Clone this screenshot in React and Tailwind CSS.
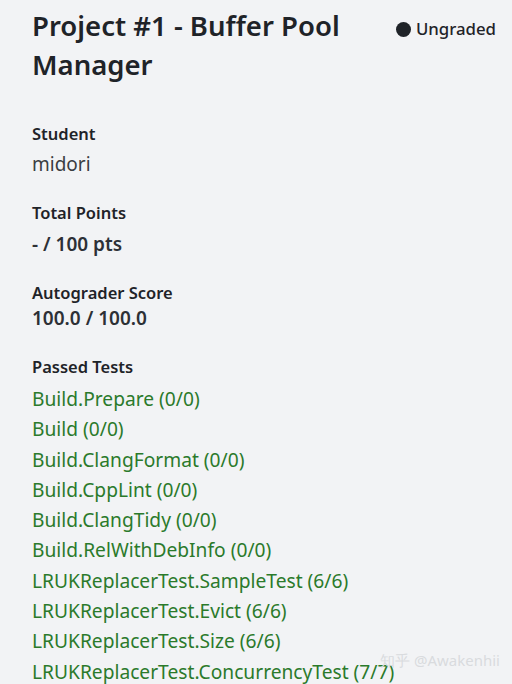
import React from 'react';

const tests = [
  'Build.Prepare (0/0)',
  'Build (0/0)',
  'Build.ClangFormat (0/0)',
  'Build.CppLint (0/0)',
  'Build.ClangTidy (0/0)',
  'Build.RelWithDebInfo (0/0)',
  'LRUKReplacerTest.SampleTest (6/6)',
  'LRUKReplacerTest.Evict (6/6)',
  'LRUKReplacerTest.Size (6/6)',
  'LRUKReplacerTest.ConcurrencyTest (7/7)',
];

const App = () => {
  return (
    <div
      className="relative h-[684px] overflow-hidden bg-[#f2f3f5] text-[#1f2328] pl-[32px] pr-[16px]"
      style={{ fontFamily: '"Noto Sans", "Open Sans", sans-serif' }}
    >
      {/* Titulo */}
      <div className="flex justify-between items-start pt-[6px]">
        <h1 className="flex-1 text-[27.5px] leading-[39px] font-semibold pr-4">
          Project #1 - Buffer Pool Manager
        </h1>
        <div className="flex items-center gap-[5px] mt-[12px] shrink-0">
          <span className="w-[15px] h-[15px] rounded-full bg-[#1f2328]"></span>
          <span className="text-[16.8px] leading-[22px] font-medium">Ungraded</span>
        </div>
      </div>

      <div className="mt-[39px]">
        <div className="text-[16.5px] leading-[22px] font-semibold">Student</div>
        <div className="mt-[6px] text-[19px] leading-[26px] text-[#3a3d42]">midori</div>
      </div>

      <div className="mt-[25px]">
        <div className="text-[16.5px] leading-[22px] font-semibold">Total Points</div>
        <div className="mt-[7px] text-[19px] leading-[26px] font-semibold text-[#2d3036]">- / 100 pts</div>
      </div>

      <div className="mt-[25px]">
        <div className="text-[16.5px] leading-[22px] font-semibold">Autograder Score</div>
        <div className="mt-[1px] text-[19px] leading-[26px] font-semibold text-[#2d3036]">100.0 / 100.0</div>
      </div>

      <div className="mt-[25px]">
        <div className="text-[16.5px] leading-[22px] font-semibold">Passed Tests</div>
        <ul className="mt-[6px]">
          {tests.map((t) => (
            <li key={t} className="text-[19.2px] leading-[30.3px] text-[#2b7a2b]">
              {t}
            </li>
          ))}
        </ul>
      </div>

      {/* marca de agua */}
      <div className="absolute right-[12px] bottom-[14px] text-[15px] leading-[20px] text-[#d9dbde]">
        知乎 @Awakenhii
      </div>
    </div>
  );
};

export default App;
